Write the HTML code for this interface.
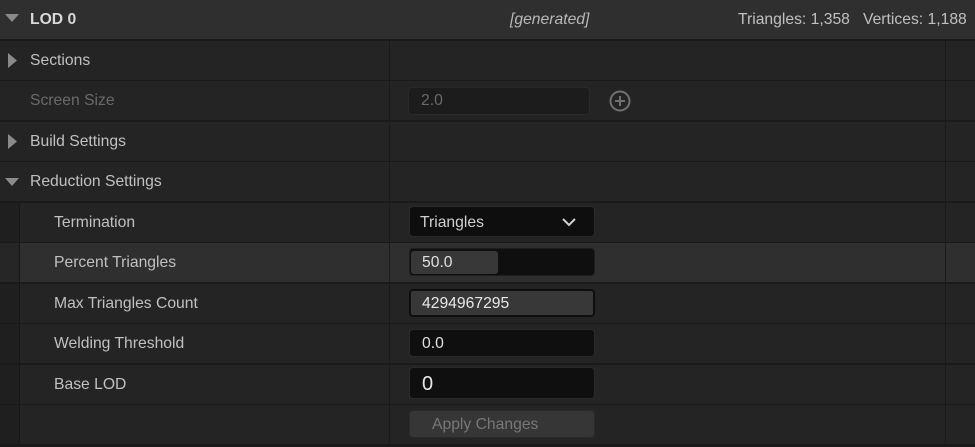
<!DOCTYPE html>
<html><head><style>
*{margin:0;padding:0;box-sizing:border-box}
body{width:975px;height:447px;background:#1a1a1a;font-family:"Liberation Sans",sans-serif;font-size:15.7px;color:#c0c0c0;position:relative;overflow:hidden}
.a{position:absolute}
.hdr{left:0;top:0;width:975px;height:39px;background:#2f2f2f}
.row{left:0;width:975px;height:39px;background:#242424}
.sep{position:absolute;top:0;width:1px;height:39px;background:#1a1a1a}
.t{position:absolute;top:11px;white-space:nowrap}
.strip{position:absolute;left:0;top:0;width:20px;height:39px;background:#1f1f1f;border-right:1px solid #171717}
.box{position:absolute;left:409px;width:186px;height:31px;background:#0f0f0f;border:1px solid #2a2a2a;border-radius:4px;color:#e0e0e0}
</style></head><body>
<div class="a hdr">
<svg class="a" style="left:5px;top:14px" width="14" height="10"><polygon points="0,0 14,0 7,8" fill="#8a8a8a"/></svg>
<div class="a" style="left:30px;top:11px;font-weight:bold;color:#d8d8d8">LOD 0</div>
<div class="a" style="left:510px;top:11px;font-style:italic;color:#b8b8b8">[generated]</div>
<div class="a" style="left:738px;top:11px;color:#c0c0c0;white-space:nowrap">Triangles: 1,358&nbsp;&nbsp;&nbsp;Vertices: 1,188</div>
</div>

<div class="a row" style="top:41px"><div class="sep" style="left:389px"></div><div class="sep" style="left:945px"></div>
<svg class="a" style="left:8px;top:12px" width="10" height="16"><polygon points="0,0 9,7.5 0,15" fill="#8a8a8a"/></svg>
<div class="t" style="left:30px">Sections</div></div>

<div class="a row" style="top:81px"><div class="sep" style="left:389px"></div><div class="sep" style="left:945px"></div>
<div class="t" style="left:30px;color:#6a6a6a">Screen Size</div>
<div class="a" style="left:408px;top:6px;width:182px;height:28px;background:#1c1c1c;border:1px solid #2a2a2a;border-radius:4px"></div>
<div class="t" style="left:421px;color:#6a6a6a">2.0</div>
<svg class="a" style="left:609px;top:9px" width="22" height="22"><circle cx="11" cy="11" r="9.5" fill="none" stroke="#707070" stroke-width="2"/><path d="M11 6v10M6 11h10" stroke="#707070" stroke-width="2"/></svg>
</div>

<div class="a row" style="top:122px"><div class="sep" style="left:389px"></div><div class="sep" style="left:945px"></div>
<svg class="a" style="left:8px;top:12px" width="10" height="16"><polygon points="0,0 9,7.5 0,15" fill="#8a8a8a"/></svg>
<div class="t" style="left:30px">Build Settings</div></div>

<div class="a row" style="top:162px"><div class="sep" style="left:389px"></div><div class="sep" style="left:945px"></div>
<svg class="a" style="left:5px;top:16px" width="14" height="10"><polygon points="0,0 14,0 7,8" fill="#8a8a8a"/></svg>
<div class="t" style="left:30px">Reduction Settings</div></div>

<div class="a row" style="top:203px"><div class="strip"></div><div class="sep" style="left:389px"></div><div class="sep" style="left:945px"></div>
<div class="t" style="left:54px">Termination</div>
<div class="box" style="top:3px;background:#0e0e0e"></div>
<div class="t" style="left:420px;color:#d0d0d0">Triangles</div>
<svg class="a" style="left:562px;top:14px" width="14" height="10"><path d="M1 2l6 6 6-6" fill="none" stroke="#d0d0d0" stroke-width="2"/></svg>
</div>

<div class="a row" style="top:243px;background:#2f2f2f"><div class="strip" style="background:#262626"></div><div class="sep" style="left:389px"></div><div class="sep" style="left:945px"></div>
<div class="t" style="left:54px">Percent Triangles</div>
<div class="box" style="top:5px;height:28px;border-color:#1e1e1e"></div>
<div class="a" style="left:411px;top:8px;width:87px;height:23px;background:#383838;border-radius:3px"></div>
<div class="t" style="left:422px;color:#e0e0e0">50.0</div>
</div>

<div class="a row" style="top:284px"><div class="strip"></div><div class="sep" style="left:389px"></div><div class="sep" style="left:945px"></div>
<div class="t" style="left:54px">Max Triangles Count</div>
<div class="box" style="top:5px;height:28px;background:#383838;border:2px solid #0f0f0f"></div>
<div class="t" style="left:422px;color:#e8e8e8">4294967295</div>
</div>

<div class="a row" style="top:324px"><div class="strip"></div><div class="sep" style="left:389px"></div><div class="sep" style="left:945px"></div>
<div class="t" style="left:54px">Welding Threshold</div>
<div class="box" style="top:5px;height:28px"></div>
<div class="t" style="left:422px;color:#e0e0e0">0.0</div>
</div>

<div class="a row" style="top:365px"><div class="strip"></div><div class="sep" style="left:389px"></div><div class="sep" style="left:945px"></div>
<div class="t" style="left:54px">Base LOD</div>
<div class="box" style="top:2px;height:32px"></div>
<div class="t" style="left:422px;top:8px;font-size:20px;color:#e8e8e8">0</div>
</div>

<div class="a row" style="top:405px"><div class="strip"></div><div class="sep" style="left:389px"></div><div class="sep" style="left:945px"></div>
<div class="box" style="top:5px;height:28px;background:#363636;border-color:#2a2a2a"></div>
<div class="t" style="left:432px;color:#777">Apply Changes</div>
</div>
</body></html>
